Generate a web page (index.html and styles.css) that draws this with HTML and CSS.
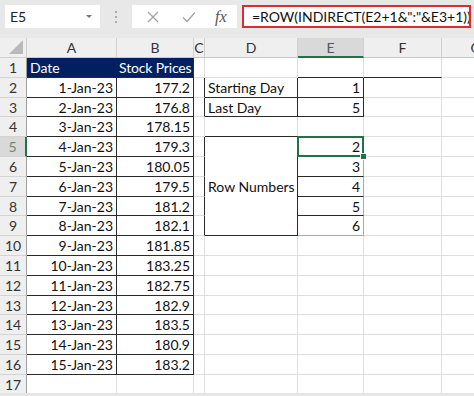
FILE: index.html
```html
<!DOCTYPE html>
<html lang="en">
<head>
    <meta charset="UTF-8">
    <title>ROW INDIRECT</title>
    <link rel="stylesheet" href="styles.css">
</head>
<body>
    <div class="toolbar">
        <div class="namebox">E5<span class="caret"></span></div>
        <div class="grip"><i></i><i></i><i></i></div>
        <div class="fxbox">
            <svg class="ico" width="14" height="14" viewBox="0 0 14 14"><path d="M2 2 L12 12 M12 2 L2 12" stroke="#a3a3a3" stroke-width="1.3" fill="none"/></svg>
            <svg class="ico" width="16" height="14" viewBox="0 0 16 14"><path d="M2 7.5 L6 11.5 L14 2.5" stroke="#a3a3a3" stroke-width="1.3" fill="none"/></svg>
            <span class="fx">fx</span>
        </div>
        <div class="formula">=ROW(INDIRECT(E2+1&amp;":"&amp;E3+1))</div>
    </div>

    <div class="sheet">
        <div class="corner"><span></span></div><div class="ch">A</div><div class="ch">B</div><div class="ch">C</div><div class="ch">D</div><div class="ch on">E</div><div class="ch">F</div><div class="ch">G</div>

        <div class="rh">1</div><div class="c hd">Date</div><div class="c hd last">Stock Prices</div><div class="c"></div><div class="c"></div><div class="c bb"></div><div class="c bb"></div><div class="c"></div>
        <div class="rh">2</div><div class="c bx n">1-Jan-23</div><div class="c bx n">177.2</div><div class="c br"></div><div class="c bx">Starting Day</div><div class="c bx n">1</div><div class="c"></div><div class="c"></div>
        <div class="rh">3</div><div class="c bx n">2-Jan-23</div><div class="c bx n">176.8</div><div class="c br"></div><div class="c bx">Last Day</div><div class="c bx n">5</div><div class="c"></div><div class="c"></div>
        <div class="rh">4</div><div class="c bx n">3-Jan-23</div><div class="c bx n">178.15</div><div class="c"></div><div class="c bb"></div><div class="c"></div><div class="c"></div><div class="c"></div>
        <div class="rh on">5</div><div class="c bx n">4-Jan-23</div><div class="c bx n">179.3</div><div class="c br"></div><div class="c bx merged">Row Numbers</div><div class="c sp n sel">2</div><div class="c"></div><div class="c"></div>
        <div class="rh">6</div><div class="c bx n">5-Jan-23</div><div class="c bx n">180.05</div><div class="c br"></div><div class="c sp n">3</div><div class="c"></div><div class="c"></div>
        <div class="rh">7</div><div class="c bx n">6-Jan-23</div><div class="c bx n">179.5</div><div class="c br"></div><div class="c sp n">4</div><div class="c"></div><div class="c"></div>
        <div class="rh">8</div><div class="c bx n">7-Jan-23</div><div class="c bx n">181.2</div><div class="c br"></div><div class="c sp n">5</div><div class="c"></div><div class="c"></div>
        <div class="rh">9</div><div class="c bx n">8-Jan-23</div><div class="c bx n">182.1</div><div class="c br"></div><div class="c sp end n">6</div><div class="c"></div><div class="c"></div>
        <div class="rh">10</div><div class="c bx n">9-Jan-23</div><div class="c bx n">181.85</div><div class="c"></div><div class="c"></div><div class="c"></div><div class="c"></div><div class="c"></div>
        <div class="rh">11</div><div class="c bx n">10-Jan-23</div><div class="c bx n">183.25</div><div class="c"></div><div class="c"></div><div class="c"></div><div class="c"></div><div class="c"></div>
        <div class="rh">12</div><div class="c bx n">11-Jan-23</div><div class="c bx n">182.75</div><div class="c"></div><div class="c"></div><div class="c"></div><div class="c"></div><div class="c"></div>
        <div class="rh">13</div><div class="c bx n">12-Jan-23</div><div class="c bx n">182.9</div><div class="c"></div><div class="c"></div><div class="c"></div><div class="c"></div><div class="c"></div>
        <div class="rh">14</div><div class="c bx n">13-Jan-23</div><div class="c bx n">183.5</div><div class="c"></div><div class="c"></div><div class="c"></div><div class="c"></div><div class="c"></div>
        <div class="rh">15</div><div class="c bx n">14-Jan-23</div><div class="c bx n">180.9</div><div class="c"></div><div class="c"></div><div class="c"></div><div class="c"></div><div class="c"></div>
        <div class="rh">16</div><div class="c bx n">15-Jan-23</div><div class="c bx n">183.2</div><div class="c"></div><div class="c"></div><div class="c"></div><div class="c"></div><div class="c"></div>
        <div class="rh">17</div><div class="c"></div><div class="c"></div><div class="c"></div><div class="c"></div><div class="c"></div><div class="c"></div><div class="c"></div>
    </div>
    <div class="scroll"></div>
</body>
</html>
```

FILE: styles.css
```css
body {
    margin: 0;
    width: 474px;
    height: 396px;
    overflow: hidden;
    background: #fff;
    font-family: Lato, "Liberation Sans", sans-serif;
    font-size: 14px;
    color: #111;
    position: relative;
}

/* formula bar */
.toolbar {
    height: 38px;
    background: #e8e8e8;
    display: flex;
    align-items: flex-start;
    padding: 5px 0 0 5px;
    box-sizing: border-box;
}

.namebox {
    width: 95px;
    height: 23px;
    background: #fff;
    box-sizing: border-box;
    padding-left: 5px;
    display: flex;
    align-items: center;
    justify-content: space-between;
    font-size: 14px;
    color: #222;
}

.caret {
    width: 0;
    height: 0;
    border-left: 3px solid transparent;
    border-right: 3px solid transparent;
    border-top: 3px solid #777;
    margin-right: 8px;
}

.grip {
    width: 32px;
    height: 23px;
    display: flex;
    flex-direction: column;
    align-items: center;
    justify-content: center;
    gap: 3px;
}

.grip i {
    width: 2px;
    height: 2px;
    background: #aaa;
}

.fxbox {
    width: 105px;
    height: 23px;
    background: #fff;
    display: flex;
    align-items: center;
    padding-left: 14px;
    box-sizing: border-box;
}

.ico {
    margin-right: 21px;
}

.fx {
    font-family: "Liberation Serif", serif;
    font-style: italic;
    font-size: 16px;
    color: #555;
    margin-left: -3px;
}

.formula {
    margin-left: 5px;
    width: 229px;
    height: 23px;
    border: 2px solid #dd2b36;
    box-sizing: border-box;
    background: #fff;
    font-size: 14px;
    line-height: 19px;
    padding-left: 8px;
    white-space: nowrap;
    overflow: hidden;
    color: #111;
}

/* grid */
.sheet {
    display: grid;
    grid-template-columns: 27px 90px 77px 11px 93px 66px 78px 68px;
    grid-template-rows: 20px repeat(17, 19.8px);
    width: 510px;
}

.corner {
    background: #efefef;
    border-right: 1px solid #cfcfcf;
    border-bottom: 1px solid #cfcfcf;
    position: relative;
}

.corner span {
    position: absolute;
    right: 3px;
    bottom: 3px;
    width: 0;
    height: 0;
    border-left: 14px solid transparent;
    border-bottom: 14px solid #b9b9b9;
}

.ch {
    background: #efefef;
    border-right: 1px solid #d0d0d0;
    border-bottom: 1px solid #c8c8c8;
    text-align: center;
    line-height: 20px;
    color: #333;
}

.ch.on {
    background: #d9d9d9;
    color: #555;
    border-bottom: 2px solid #217346;
}

.rh {
    background: #efefef;
    border-right: 1px solid #9f9f9f;
    border-bottom: 1px solid #d4d4d4;
    text-align: center;
    line-height: 19px;
    color: #333;
}

.rh.on {
    background: #d9d9d9;
    color: #6a8a76;
    border-right: 2px solid #217346;
}

.c {
    border-right: 1px solid #dedede;
    border-bottom: 1px solid #dedede;
    line-height: 19px;
    padding: 0 3px;
    white-space: nowrap;
    overflow: hidden;
    box-sizing: border-box;
}

.n {
    text-align: right;
}

.hd {
    background: #002060;
    color: #fff;
    border-right-color: #002060;
    border-bottom-color: #2a2a2a;
}

.hd.last {
    border-right-color: #2a2a2a;
    padding: 0 2px;
    letter-spacing: -0.15px;
}

.bx {
    border-right-color: #2a2a2a;
    border-bottom-color: #2a2a2a;
}

.bb {
    border-bottom-color: #2a2a2a;
}

.br {
    border-right-color: #2a2a2a;
}

.merged {
    grid-row: span 5;
    display: flex;
    align-items: center;
}

.sp {
    border-right-color: #93aed4;
    border-bottom-color: #2a2a2a;
}

.sp.end {
    border-bottom-color: #93aed4;
}

.sel {
    position: relative;
    overflow: visible;
}

.sel::after {
    content: "";
    position: absolute;
    left: -1px;
    top: -1px;
    right: -1px;
    bottom: -1px;
    border: 2px solid #217346;
}

.sel::before {
    content: "";
    position: absolute;
    right: -4px;
    bottom: -4px;
    width: 5px;
    height: 5px;
    background: #217346;
    border: 1px solid #fff;
    z-index: 1;
}

.scroll {
    position: absolute;
    left: 0;
    right: 0;
    bottom: 0;
    height: 3px;
    background: #e6e6e6;
}
```
